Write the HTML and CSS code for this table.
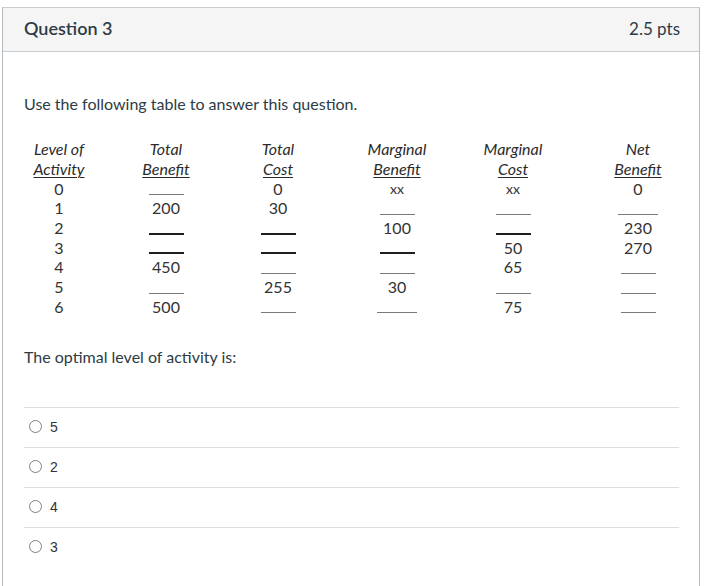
FILE: index.html
```html
<!DOCTYPE html>
<html lang="en">
<head>
<meta charset="utf-8">
<title>Question 3</title>
<link rel="stylesheet" href="styles.css">
</head>
<body>
<div class="question">
  <div class="q-header">
    <span class="q-name">Question 3</span>
    <span class="q-points">2.5 pts</span>
  </div>
  <div class="q-body">
    <p class="q-text intro">Use the following table to answer this question.</p>
    <div class="data-table">
      <div class="cell head">Level of</div>
      <div class="cell head">Total</div>
      <div class="cell head">Total</div>
      <div class="cell head">Marginal</div>
      <div class="cell head">Marginal</div>
      <div class="cell head">Net</div>

      <div class="cell head ul">Activity</div>
      <div class="cell head ul">Benefit</div>
      <div class="cell head ul">Cost</div>
      <div class="cell head ul">Benefit</div>
      <div class="cell head ul">Cost</div>
      <div class="cell head ul">Benefit</div>

      <div class="cell">0</div>
      <div class="cell"><span class="blank thin"></span></div>
      <div class="cell">0</div>
      <div class="cell small">xx</div>
      <div class="cell small">xx</div>
      <div class="cell">0</div>

      <div class="cell">1</div>
      <div class="cell">200</div>
      <div class="cell">30</div>
      <div class="cell"><span class="blank thin"></span></div>
      <div class="cell"><span class="blank thin"></span></div>
      <div class="cell"><span class="blank thin wide"></span></div>

      <div class="cell">2</div>
      <div class="cell"><span class="blank thick"></span></div>
      <div class="cell"><span class="blank thick"></span></div>
      <div class="cell">100</div>
      <div class="cell"><span class="blank thick"></span></div>
      <div class="cell">230</div>

      <div class="cell">3</div>
      <div class="cell"><span class="blank thick"></span></div>
      <div class="cell"><span class="blank thick"></span></div>
      <div class="cell"><span class="blank thick"></span></div>
      <div class="cell">50</div>
      <div class="cell">270</div>

      <div class="cell">4</div>
      <div class="cell">450</div>
      <div class="cell"><span class="blank thin"></span></div>
      <div class="cell"><span class="blank thin"></span></div>
      <div class="cell">65</div>
      <div class="cell"><span class="blank thin"></span></div>

      <div class="cell">5</div>
      <div class="cell"><span class="blank thin"></span></div>
      <div class="cell">255</div>
      <div class="cell">30</div>
      <div class="cell"><span class="blank thin"></span></div>
      <div class="cell"><span class="blank thin"></span></div>

      <div class="cell">6</div>
      <div class="cell">500</div>
      <div class="cell"><span class="blank thin"></span></div>
      <div class="cell"><span class="blank thin wide"></span></div>
      <div class="cell">75</div>
      <div class="cell"><span class="blank thin"></span></div>
    </div>
    <p class="q-text prompt">The optimal level of activity is:</p>
    <div class="answers">
      <label class="answer"><span class="radio"></span><span class="answer-text">5</span></label>
      <label class="answer"><span class="radio"></span><span class="answer-text">2</span></label>
      <label class="answer"><span class="radio"></span><span class="answer-text">4</span></label>
      <label class="answer"><span class="radio"></span><span class="answer-text">3</span></label>
    </div>
  </div>
</div>
</body>
</html>
```
FILE: styles.css
```css
html, body {
  margin: 0;
  padding: 0;
  background: #ffffff;
}

body {
  font-family: Lato, "Open Sans", "Liberation Sans", sans-serif;
  color: #2d3b45;
  height: 586px;
  overflow: hidden;
}

.question {
  margin: 7px 0 0 2px;
  width: 696px;
  border: 1px solid #b4b9bd;
  border-top-color: #c7cdd1;
  min-height: 620px;
}

.q-header {
  height: 44px;
  box-sizing: border-box;
  padding: 0 19px 3px 21px;
  background: #f5f5f5;
  border-bottom: 1px solid #c7cdd1;
  display: flex;
  align-items: center;
  justify-content: space-between;
}

.q-name {
  font-size: 18px;
  font-weight: 600;
  color: #2d3b45;
}

.q-points {
  font-size: 17px;
  color: #2d3b45;
}

.q-body {
  padding: 40px 20px 0 21px;
}

.q-text {
  margin: 0;
  font-size: 16px;
  line-height: 24px;
  color: #2d3b45;
}

.data-table {
  margin-top: 23px;
  display: grid;
  grid-template-columns: 107px 112px 119px 116px 125px 70px;
  grid-auto-rows: 19.7px;
  font-family: Lato, "Open Sans", sans-serif;
  font-size: 16px;
  color: #333333;
}

.cell {
  width: 70px;
  display: flex;
  align-items: center;
  justify-content: center;
  line-height: 19px;
  white-space: nowrap;
}

.cell.head {
  font-style: italic;
  color: #2b2b2b;
}

.cell.ul {
  text-decoration: underline;
  text-decoration-thickness: 1px;
  text-underline-offset: 2px;
}

.cell.small {
  font-size: 14px;
}

.blank {
  display: block;
  width: 35px;
  height: 14px;
  box-sizing: border-box;
}

.blank.wide {
  width: 40px;
}

.blank.thin {
  border-bottom: 1px solid #7a7a7a;
}

.blank.thick {
  border-bottom: 2px solid #1e1e1e;
}

.prompt {
  margin-top: 29px;
}

.answers {
  margin-top: 38px;
  width: 655px;
}

.answer {
  display: flex;
  align-items: center;
  height: 37px;
  padding: 0 0 2px 5px;
  border-top: 1px solid #dcdfe1;
  font-family: "Liberation Sans", Arial, sans-serif;
  font-size: 14px;
  color: #333333;
}

.radio {
  width: 13px;
  height: 13px;
  border: 1px solid #7f7f7f;
  border-radius: 50%;
  box-sizing: border-box;
  margin-right: 8px;
  flex: none;
}

.answer-text {
  line-height: 16px;
}
```
